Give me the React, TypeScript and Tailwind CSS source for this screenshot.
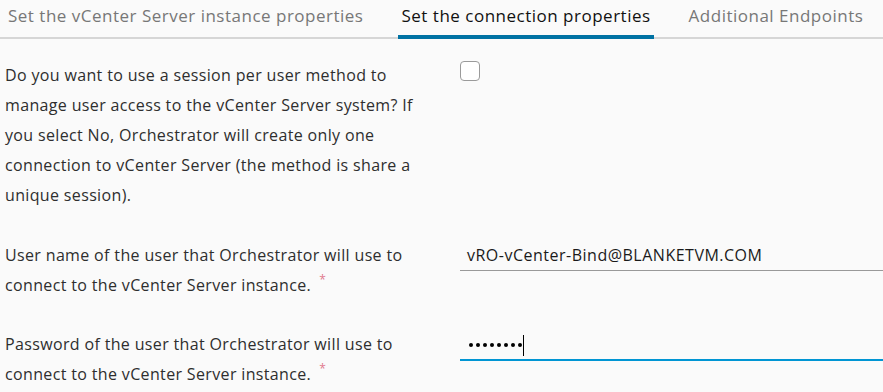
import React from 'react';

const tabs = [
  { label: 'Set the vCenter Server instance properties', active: false },
  { label: 'Set the connection properties', active: true },
  { label: 'Additional Endpoints', active: false },
];

const Required = () => (
  <span className="ml-[8px] inline-block align-top text-[12px] leading-[20px] text-[#e0788c]">*</span>
);

const Dots = () => (
  <div className="flex items-center gap-[3px]">
    {Array.from({ length: 8 }).map((_, i) => (
      <div key={i} className="h-[4px] w-[4px] rounded-full bg-black" />
    ))}
  </div>
);

export default function App() {
  return (
    <div
      className="w-[883px] h-[392px] overflow-hidden bg-[#fafafa] text-[#2e2e2e]"
      style={{ fontFamily: '"Open Sans", "Noto Sans", sans-serif' }}
    >
      {/* Tabs */}
      <div className="flex h-[39px] border-b-2 border-[#d6d6d6] pl-[5px]">
        {tabs.map((t) => (
          <div
            key={t.label}
            className={`-mb-[2px] mr-[32px] flex items-center whitespace-nowrap px-[3px] pb-[4px] text-[17px] tracking-[0.5px] ${
              t.active ? 'border-b-4 border-[#0072a3] text-[#111]' : 'border-b-4 border-transparent text-[#777]'
            }`}
          >
            {t.label}
          </div>
        ))}
      </div>

      {/* Form */}
      <div className="flex flex-col pl-[5px] text-[16px] leading-[30px] tracking-[0.35px]">
        <div className="flex pt-[21px]">
          <div className="w-[455px] pr-[33px]">
            Do you want to use a session per user method to manage user access to the vCenter Server system? If you
            select No, Orchestrator will create only one connection to vCenter Server (the method is share a unique
            session).
          </div>
          <div className="pt-[1px]">
            <div className="h-[20px] w-[20px] rounded-[4px] border border-[#9a9a9a] bg-white" />
          </div>
        </div>

        <div className="mt-[30px] flex">
          <div className="w-[455px] pr-[33px]">
            User name of the user that Orchestrator will use to connect to the vCenter Server instance.
            <Required />
          </div>
          <div className="flex-1">
            <div className="h-[31px] border-b border-[#999] pl-[7px] tracking-[0.5px] text-[#1a1a1a]">
              vRO-vCenter-Bind@BLANKETVM.COM
            </div>
          </div>
        </div>

        <div className="mt-[29px] flex">
          <div className="w-[455px] pr-[33px]">
            Password of the user that Orchestrator will use to connect to the vCenter Server instance.
            <Required />
          </div>
          <div className="flex-1">
            <div className="flex h-[32px] items-center border-b-2 border-[#0095d3] pl-[9px] pt-[2px]">
              <Dots />
              <span className="ml-[1px] h-[21px] w-px bg-black" />
            </div>
          </div>
        </div>
      </div>
    </div>
  );
}
